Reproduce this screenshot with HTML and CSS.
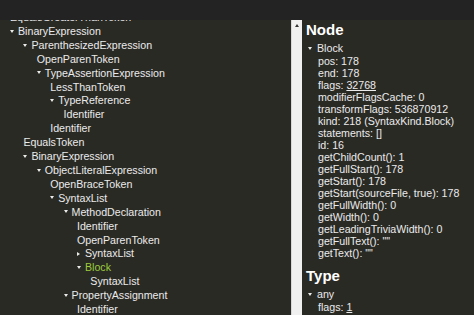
FILE: index.html
```html
<!DOCTYPE html>
<html>
<head>
<meta charset="utf-8">
<link rel="stylesheet" href="styles.css">
</head>
<body>
<div class="app">
  <div class="header"></div>
  <div class="main">
    <div class="tree-pane">
      <div class="tree">
        <div class="node leaf">EqualsGreaterThanToken</div>
        <div class="node">
          <div class="row"><span class="tri"></span>BinaryExpression</div>
          <div class="kids">
            <div class="node">
              <div class="row"><span class="tri"></span>ParenthesizedExpression</div>
              <div class="kids">
                <div class="node leaf">OpenParenToken</div>
                <div class="node">
                  <div class="row"><span class="tri"></span>TypeAssertionExpression</div>
                  <div class="kids">
                    <div class="node leaf">LessThanToken</div>
                    <div class="node">
                      <div class="row"><span class="tri"></span>TypeReference</div>
                      <div class="kids">
                        <div class="node leaf">Identifier</div>
                      </div>
                    </div>
                    <div class="node leaf">Identifier</div>
                  </div>
                </div>
              </div>
            </div>
            <div class="node leaf">EqualsToken</div>
            <div class="node">
              <div class="row"><span class="tri"></span>BinaryExpression</div>
              <div class="kids">
                <div class="node">
                  <div class="row"><span class="tri"></span>ObjectLiteralExpression</div>
                  <div class="kids">
                    <div class="node leaf">OpenBraceToken</div>
                    <div class="node">
                      <div class="row"><span class="tri"></span>SyntaxList</div>
                      <div class="kids">
                        <div class="node">
                          <div class="row"><span class="tri"></span>MethodDeclaration</div>
                          <div class="kids">
                            <div class="node leaf">Identifier</div>
                            <div class="node leaf">OpenParenToken</div>
                            <div class="node">
                              <div class="row"><span class="tri closed"></span>SyntaxList</div>
                            </div>
                            <div class="node">
                              <div class="row selected"><span class="tri"></span>Block</div>
                              <div class="kids">
                                <div class="node leaf">SyntaxList</div>
                              </div>
                            </div>
                          </div>
                        </div>
                        <div class="node">
                          <div class="row"><span class="tri"></span>PropertyAssignment</div>
                          <div class="kids">
                            <div class="node leaf">Identifier</div>
                          </div>
                        </div>
                      </div>
                    </div>
                  </div>
                </div>
              </div>
            </div>
          </div>
        </div>
      </div>
    </div>
    <div class="scrollbar"><span class="up"></span></div>
    <div class="info-pane">
      <h2 class="title">Node</h2>
      <div class="group"><span class="tri"></span>Block</div>
      <div class="props">
        <div>pos: 178</div>
        <div>end: 178</div>
        <div>flags: <u>32768</u></div>
        <div>modifierFlagsCache: 0</div>
        <div>transformFlags: 536870912</div>
        <div>kind: 218 (SyntaxKind.Block)</div>
        <div>statements: []</div>
        <div>id: 16</div>
        <div>getChildCount(): 1</div>
        <div>getFullStart(): 178</div>
        <div>getStart(): 178</div>
        <div>getStart(sourceFile, true): 178</div>
        <div>getFullWidth(): 0</div>
        <div>getWidth(): 0</div>
        <div>getLeadingTriviaWidth(): 0</div>
        <div>getFullText(): ""</div>
        <div>getText(): ""</div>
      </div>
      <h2 class="title type">Type</h2>
      <div class="group"><span class="tri"></span>any</div>
      <div class="props">
        <div>flags: <u>1</u></div>
      </div>
    </div>
  </div>
</div>
</body>
</html>
```
FILE: styles.css
```css
html, body {
  margin: 0;
  padding: 0;
}
body {
  background: #2a2a25;
  font-family: "Liberation Sans", Arial, sans-serif;
  font-size: 10.65px;
  color: #ebebeb;
  width: 474px;
  height: 315px;
  overflow: hidden;
}
.app {
  display: flex;
  flex-direction: column;
  height: 315px;
}
.header {
  height: 20px;
  background: #232323;
  flex: none;
  position: relative;
  z-index: 2;
}
.main {
  display: flex;
  flex: 1;
  min-height: 0;
}
.tree-pane {
  width: 291px;
  flex: none;
  overflow: hidden;
}
.tree {
  margin-top: -9px;
  padding-left: 10px;
  line-height: 13.9px;
  white-space: nowrap;
}
.kids {
  padding-left: 13.4px;
}
.tri {
  display: inline-block;
  width: 0;
  height: 0;
  border-left: 2px solid transparent;
  border-right: 2px solid transparent;
  border-top: 3px solid #ebebeb;
  vertical-align: middle;
  margin-right: 4px;
  position: relative;
  top: -1px;
}
.tri.closed {
  border-top: 2px solid transparent;
  border-bottom: 2px solid transparent;
  border-left: 3px solid #ebebeb;
  border-right: 0;
  margin-right: 5px;
}
.selected {
  color: #9ccc3c;
}
.selected .tri {
  border-top-color: #ebebeb;
}
.scrollbar {
  width: 11px;
  flex: none;
  background: #f0f0f0;
  border-left: 1px solid #d8d8d8;
  box-sizing: border-box;
  display: flex;
  justify-content: center;
}
.up {
  margin-top: 4px;
  width: 0;
  height: 0;
  border-left: 2.5px solid transparent;
  border-right: 2.5px solid transparent;
  border-bottom: 3px solid #333;
}
.info-pane {
  flex: 1;
  padding: 1px 0 0 4px;
  white-space: nowrap;
  overflow: hidden;
}
.title {
  margin: 0;
  font-size: 15px;
  line-height: 18px;
  font-weight: bold;
  color: #fff;
}
.title.type {
  margin-top: 8px;
}
.group {
  margin-top: 2px;
  line-height: 14px;
  padding-left: 2px;
}
.group .tri {
  margin-right: 5px;
}
.props {
  padding-left: 12px;
  line-height: 12px;
}
.props u {
  text-decoration: underline;
}
```
